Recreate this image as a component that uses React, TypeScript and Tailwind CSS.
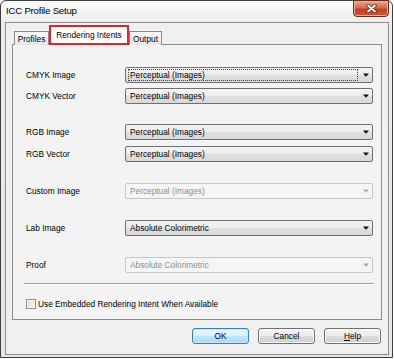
import React from "react";

const font = "font-['Liberation_Sans',Arial,sans-serif]";

function Arrow({ disabled }: { disabled?: boolean }) {
  return (
    <svg width="6" height="4" viewBox="0 0 6 4">
      <path d="M0 0.5h6L3 3.8z" fill={disabled ? "#a9a9a9" : "#111"} />
    </svg>
  );
}

function Combo({ value, disabled, focused }: { value: string; disabled?: boolean; focused?: boolean }) {
  return (
    <div
      className={`flex h-[16px] w-[248px] items-center rounded-[2px] border ${
        disabled
          ? "border-[#c4c7ca] bg-[#f5f5f5] text-[#8e8e8e]"
          : "border-[#707070] bg-[linear-gradient(#f4f4f4,#ececec_50%,#e0e0e0_50%,#d8d8d8)] text-black"
      }`}
    >
      <div
        className={`ml-[2px] flex h-[12px] w-[230px] items-center pl-[1px] ${
          focused ? "border border-dotted border-[#444]" : "border border-transparent"
        }`}
      >
        {value}
      </div>
      <div className="ml-auto mr-[3px] flex items-center">
        <Arrow disabled={disabled} />
      </div>
    </div>
  );
}

function Row({ label, value, disabled, focused, mt }: { label: string; value: string; disabled?: boolean; focused?: boolean; mt: string }) {
  return (
    <div className={`flex items-center ${mt}`}>
      <div className="w-[99px] text-black">{label}</div>
      <Combo value={value} disabled={disabled} focused={focused} />
    </div>
  );
}

function Button({ children, primary }: { children: React.ReactNode; primary?: boolean }) {
  return (
    <div
      className={`flex h-[16px] w-[57px] items-center justify-center rounded-[3px] border ${
        primary
          ? "border-[#3c7fb1] bg-[linear-gradient(#eaf6fd,#d9f0fc_50%,#bee6fd_50%,#a7d9f5)] shadow-[inset_0_0_0_1px_#c8e8fa]"
          : "border-[#707070] bg-[linear-gradient(#f2f2f2,#ebebeb_50%,#dddddd_50%,#cfcfcf)] shadow-[inset_0_0_0_1px_#fcfcfc]"
      }`}
    >
      {children}
    </div>
  );
}

export default function App() {
  return (
    <div className={`h-[359px] w-[394px] bg-white text-[8.3px] leading-none ${font}`}>
      <div className="flex h-[358px] w-[393px] flex-col rounded-t-[6px] border border-[#3f3f3f] bg-[linear-gradient(#fbfbfb,#ececec_22px,#e6e6e6)]">
        {/* title bar */}
        <div className="flex h-[21px] items-start">
          <div className="ml-[5px] mt-[5px] text-[9.6px] tracking-[-0.2px] text-black">ICC Profile Setup</div>
          <div className="-mt-[1px] ml-auto mr-[3px] flex h-[17px] w-[36px] items-center justify-center rounded-b-[4px] border border-[#6b2a1c] bg-[linear-gradient(#e8a899,#d56b53_45%,#c2401f_55%,#cf5637)] shadow-[inset_0_0_0_1px_#eeb0a2]">
            <svg width="11" height="9" viewBox="0 0 11 9">
              <path d="M2 1.5L9 7.5M9 1.5L2 7.5" stroke="#5a2418" strokeWidth="3.4" strokeLinecap="round" />
              <path d="M2 1.5L9 7.5M9 1.5L2 7.5" stroke="#fff" strokeWidth="1.8" strokeLinecap="round" />
            </svg>
          </div>
        </div>

        {/* client area */}
        <div className="mb-[2px] ml-[4px] mr-[3px] flex flex-1 flex-col border border-[#8c8c8c] bg-[#f0f0f0] px-[6px] pt-[3px]">
          {/* tabs */}
          <div className="relative z-10 flex h-[19px] items-end pl-[2px]">
            <div className="flex h-[14px] w-[35px] items-center justify-center border border-b-0 border-[#898c95] bg-[linear-gradient(#fbfbfb,#e6e6e6)] pt-[1px]">
              Profiles
            </div>
            <div className="flex h-[20px] w-[80px] items-center justify-center border-2 border-[#e5202b] bg-white pt-[1px]">
              Rendering Intents
            </div>
            <div className="flex h-[14px] w-[33px] items-center justify-center border border-b-0 border-[#898c95] bg-[linear-gradient(#fbfbfb,#e6e6e6)] pt-[1px]">
              Output
            </div>
          </div>

          {/* panel */}
          <div className="-mt-[1px] flex h-[276px] flex-col border border-[#898c95] bg-[#f3f3f3] pl-[13px] pr-[6px]">
            <Row mt="mt-[22px]" label="CMYK Image" value="Perceptual (Images)" focused />
            <Row mt="mt-[5px]" label="CMYK Vector" value="Perceptual (Images)" />
            <Row mt="mt-[20px]" label="RGB Image" value="Perceptual (Images)" />
            <Row mt="mt-[6px]" label="RGB Vector" value="Perceptual (Images)" />
            <Row mt="mt-[21px]" label="Custom Image" value="Perceptual (Images)" disabled />
            <Row mt="mt-[21px]" label="Lab Image" value="Absolute Colorimetric" />
            <Row mt="mt-[21px]" label="Proof" value="Absolute Colorimetric" disabled />
            <div className="-ml-[2px] mr-[1px] mt-[10px] h-[2px] border-t border-b border-t-[#a0a0a0] border-b-white" />
            <div className="mt-[14px] flex items-center">
              <div className="h-[10px] w-[10px] border border-[#8f8f8f] bg-[linear-gradient(135deg,#dcdcdc,#f8f8f8)] shadow-[inset_0_0_0_1px_#f4f4f4]" />
              <div className="ml-[2px]">Use Embedded Rendering Intent When Available</div>
            </div>
          </div>

          {/* buttons */}
          <div className="mt-[8px] flex justify-end gap-[9px] pr-[1px]">
            <Button primary>OK</Button>
            <Button>Cancel</Button>
            <Button>
              <span>
                <span className="underline">H</span>elp
              </span>
            </Button>
          </div>
        </div>
      </div>
    </div>
  );
}
